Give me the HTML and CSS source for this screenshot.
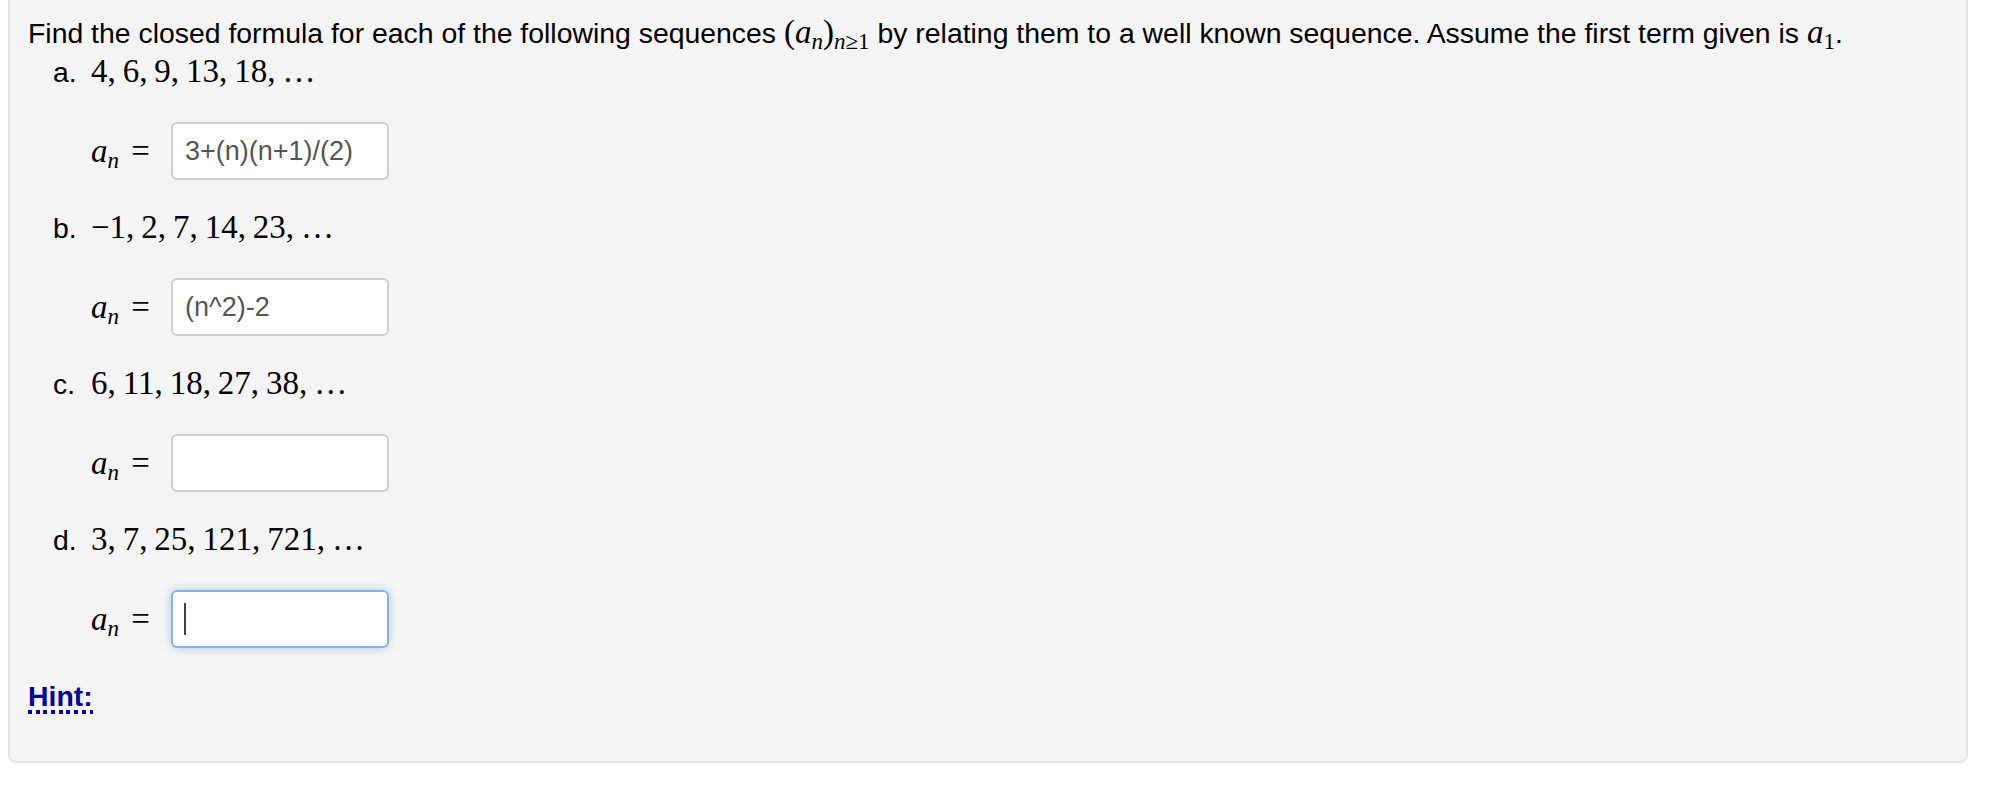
FILE: index.html
```html
<!DOCTYPE html>
<html lang="en">
<head>
    <meta charset="UTF-8">
    <meta name="viewport" content="width=device-width, initial-scale=1.0">
    <title>Closed formulas for sequences</title>
    <link rel="stylesheet" href="styles.css">
</head>
<body>
    <div class="problem">
        <p class="intro">Find the closed formula for each of the following sequences <span class="math">(<i>a</i><sub><i>n</i></sub>)<sub><i>n</i>≥1</sub></span> by relating them to a well known sequence. Assume the first term given is <span class="math"><i>a</i><sub>1</sub></span>.</p>

        <ol class="parts">
            <li class="part">
                <div class="seq"><span class="label">a.</span><span class="math">4, 6, 9, 13, 18, …</span></div>
                <div class="answer">
                    <span class="math"><i>a</i><sub><i>n</i></sub><span class="eq">=</span></span>
                    <span class="field"><input type="text" value="3+(n)(n+1)/(2)"></span>
                </div>
            </li>
            <li class="part">
                <div class="seq"><span class="label">b.</span><span class="math">−1, 2, 7, 14, 23, …</span></div>
                <div class="answer">
                    <span class="math"><i>a</i><sub><i>n</i></sub><span class="eq">=</span></span>
                    <span class="field"><input type="text" value="(n^2)-2"></span>
                </div>
            </li>
            <li class="part">
                <div class="seq"><span class="label">c.</span><span class="math">6, 11, 18, 27, 38, …</span></div>
                <div class="answer">
                    <span class="math"><i>a</i><sub><i>n</i></sub><span class="eq">=</span></span>
                    <span class="field"><input type="text" value=""></span>
                </div>
            </li>
            <li class="part">
                <div class="seq"><span class="label">d.</span><span class="math">3, 7, 25, 121, 721, …</span></div>
                <div class="answer">
                    <span class="math"><i>a</i><sub><i>n</i></sub><span class="eq">=</span></span>
                    <span class="field focused"><input type="text" value=""></span>
                </div>
            </li>
        </ol>

        <a class="hint" href="#">Hint:</a>
    </div>
</body>
</html>
```

FILE: styles.css
```css
* {
    margin: 0;
    padding: 0;
    box-sizing: border-box;
}

body {
    font-family: "Liberation Sans", Arial, sans-serif;
    font-size: 28.4px;
    line-height: 39px;
    color: #000;
    background: #fff;
}

.problem {
    width: 1960px;
    margin: -10px 0 0 8px;
    padding: 22px 18px 45px;
    background: #f4f4f4;
    border: 2px solid #e3e3e3;
    border-radius: 8px;
}

.intro {
    height: 39px;
    white-space: nowrap;
}

.math {
    font-family: "Liberation Serif", "Times New Roman", serif;
    font-size: 33px;
    line-height: 1;
    word-spacing: -0.04em;
}

.math sub {
    font-size: 23px;
    line-height: 0;
    vertical-align: -6px;
}

.parts {
    list-style: none;
    padding-left: 25px;
}

.part {
    margin-bottom: 29px;
}

.seq {
    height: 39px;
}

.label {
    display: inline-block;
    width: 38px;
}

.answer {
    display: flex;
    align-items: center;
    height: 58px;
    margin-top: 30px;
    padding-left: 38px;
}

.eq {
    display: inline-block;
    width: 25px;
    margin: 0 9px;
    text-align: center;
}

.field {
    position: relative;
    margin-left: 9px;
}

.field input {
    display: block;
    width: 218px;
    height: 58px;
    padding: 0 12px;
    font-family: "Liberation Sans", Arial, sans-serif;
    font-size: 27px;
    color: #555;
    background: #fff;
    border: 2px solid #cfcfcf;
    border-radius: 6px;
    outline: none;
}

.field.focused input {
    border-color: #80b4ea;
    box-shadow: 0 0 10px rgba(82, 168, 236, 0.45);
}

.field.focused::after {
    content: "";
    position: absolute;
    left: 13px;
    top: 13px;
    width: 2px;
    height: 32px;
    background: #444;
}

.hint {
    position: relative;
    display: inline-block;
    font-weight: bold;
    color: #0000a3;
    text-decoration: none;
}

.hint::after {
    content: "";
    position: absolute;
    left: 0;
    right: 0;
    bottom: 2px;
    height: 4px;
    background: repeating-linear-gradient(to right, #0000a3 0 4px, transparent 4px 7.7px);
}
```
